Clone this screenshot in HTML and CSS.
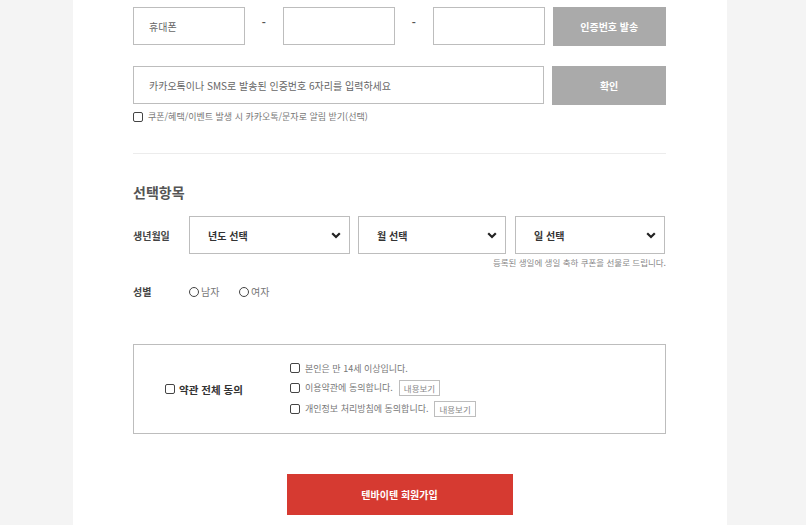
FILE: index.html
```html
<!DOCTYPE html>
<html lang="ko">
<head>
    <meta charset="UTF-8">
    <meta name="viewport" content="width=device-width, initial-scale=1.0">
    <title>회원가입</title>
    <link rel="stylesheet" href="styles.css">
</head>
<body>
    <div class="page">
        <div class="phone-row">
            <input type="text" class="field phone" placeholder="휴대폰">
            <span class="dash">-</span>
            <input type="text" class="field phone">
            <span class="dash">-</span>
            <input type="text" class="field phone">
            <button type="button" class="gray-btn">인증번호 발송</button>
        </div>

        <div class="code-row">
            <input type="text" class="field code" placeholder="카카오톡이나 SMS로 발송된 인증번호 6자리를 입력하세요">
            <button type="button" class="gray-btn">확인</button>
        </div>
        <label class="check small">
            <input type="checkbox">
            <span>쿠폰/혜택/이벤트 발생 시 카카오톡/문자로 알림 받기(선택)</span>
        </label>

        <hr class="divider">

        <h2 class="section-title">선택항목</h2>

        <div class="form-row birth">
            <span class="row-label">생년월일</span>
            <div class="select-wrap year">
                <select><option>년도 선택</option></select>
                <svg class="chevron" width="10" height="7" viewBox="0 0 10 7"><path d="M1.2 1.2 L5 5 L8.8 1.2" fill="none" stroke="#222" stroke-width="2.2"/></svg>
            </div>
            <div class="select-wrap month">
                <select><option>월 선택</option></select>
                <svg class="chevron" width="10" height="7" viewBox="0 0 10 7"><path d="M1.2 1.2 L5 5 L8.8 1.2" fill="none" stroke="#222" stroke-width="2.2"/></svg>
            </div>
            <div class="select-wrap day">
                <select><option>일 선택</option></select>
                <svg class="chevron" width="10" height="7" viewBox="0 0 10 7"><path d="M1.2 1.2 L5 5 L8.8 1.2" fill="none" stroke="#222" stroke-width="2.2"/></svg>
            </div>
        </div>
        <p class="birth-note">등록된 생일에 생일 축하 쿠폰을 선물로 드립니다.</p>

        <div class="form-row gender">
            <span class="row-label">성별</span>
            <label class="radio"><input type="radio" name="gender"><span>남자</span></label>
            <label class="radio"><input type="radio" name="gender"><span>여자</span></label>
        </div>

        <div class="terms">
            <div class="terms-all">
                <label class="check strong">
                    <input type="checkbox">
                    <span>약관 전체 동의</span>
                </label>
            </div>
            <div class="terms-list">
                <label class="check small">
                    <input type="checkbox">
                    <span>본인은 만 14세 이상입니다.</span>
                </label>
                <div class="terms-item">
                    <label class="check small">
                        <input type="checkbox">
                        <span>이용약관에 동의합니다.</span>
                    </label>
                    <button type="button" class="view-btn">내용보기</button>
                </div>
                <div class="terms-item">
                    <label class="check small">
                        <input type="checkbox">
                        <span>개인정보 처리방침에 동의합니다.</span>
                    </label>
                    <button type="button" class="view-btn">내용보기</button>
                </div>
            </div>
        </div>

        <div class="submit-wrap">
            <button type="submit" class="submit-btn">텐바이텐 회원가입</button>
        </div>
    </div>
</body>
</html>
```

FILE: styles.css
```css
body {
    margin: 0;
    background-color: #f4f4f4;
    font-family: "Noto Sans CJK KR", "Noto Sans", sans-serif;
    color: #333;
}
.page {
    width: 533px;
    min-height: 525px;
    margin-left: 73px;
    padding: 7px 61px 0 60px;
    background: #fff;
    box-sizing: content-box;
}
.field {
    box-sizing: border-box;
    height: 38px;
    border: 1px solid #bdbdbd;
    padding: 0 15px;
    font-family: inherit;
    font-size: 10px;
    color: #333;
    outline: none;
}
.field::placeholder {
    color: #666;
}
.phone-row {
    display: flex;
    align-items: flex-start;
}
.phone {
    width: 112px;
}
.dash {
    width: 38px;
    text-align: center;
    line-height: 30px;
    font-size: 11px;
    font-weight: bold;
    color: #555;
}
.gray-btn {
    width: 114px;
    height: 39px;
    margin-left: 8px;
    border: none;
    background-color: #aaaaaa;
    color: #fff;
    font-family: inherit;
    font-size: 10px;
    font-weight: bold;
    cursor: pointer;
}
.code-row {
    display: flex;
    margin-top: 20px;
}
.code {
    width: 412px;
}
.check {
    display: flex;
    align-items: center;
    gap: 5px;
}
.check input[type="checkbox"] {
    appearance: none;
    width: 10px;
    height: 10px;
    margin: 0;
    border: 1px solid #444;
    border-radius: 2px;
    background: #fff;
    box-sizing: border-box;
}
.check.small {
    font-size: 9px;
    color: #777;
}
.page > .check.small {
    margin-top: 5px;
}
.divider {
    border: none;
    border-top: 1px solid #ececec;
    margin: 30px 0 0 0;
}
.section-title {
    margin: 26px 0 0 0;
    font-size: 14px;
    font-weight: bold;
    color: #555;
    line-height: 24px;
}
.form-row {
    display: flex;
    align-items: center;
}
.birth {
    margin-top: 12px;
}
.row-label {
    width: 56px;
    font-size: 10px;
    font-weight: bold;
    color: #444;
}
.select-wrap {
    position: relative;
    height: 38px;
}
.select-wrap select {
    appearance: none;
    width: 100%;
    height: 38px;
    border: 1px solid #bdbdbd;
    background: #fff;
    padding: 0 18px;
    font-family: inherit;
    font-size: 10px;
    font-weight: bold;
    color: #333;
    outline: none;
}
.chevron {
    position: absolute;
    right: 9px;
    top: 16px;
}
.year {
    width: 161px;
}
.month {
    width: 148px;
    margin-left: 8px;
}
.day {
    width: 150px;
    margin-left: 9px;
}
.birth-note {
    margin: 2px 0 0 0;
    text-align: right;
    font-size: 8.5px;
    color: #888;
}
.gender {
    margin-top: 16px;
}
.radio {
    display: flex;
    align-items: center;
    gap: 2px;
    width: 50px;
    font-size: 10px;
    color: #777;
}
.radio input {
    appearance: none;
    width: 10px;
    height: 10px;
    margin: 0;
    border: 1px solid #444;
    border-radius: 50%;
    box-sizing: border-box;
}
.terms {
    display: flex;
    align-items: center;
    height: 90px;
    margin-top: 45px;
    border: 1px solid #bdbdbd;
    box-sizing: border-box;
}
.terms-all {
    width: 140px;
    padding-right: 16px;
    display: flex;
    justify-content: center;
}
.check.strong {
    font-size: 10.5px;
    font-weight: bold;
    color: #333;
    gap: 4px;
}
.terms-list {
    display: flex;
    flex-direction: column;
    gap: 5px;
}
.terms-item {
    display: flex;
    align-items: center;
    gap: 6px;
}
.view-btn {
    height: 16px;
    padding: 0 4px;
    border: 1px solid #bdbdbd;
    background: #fff;
    font-family: inherit;
    font-size: 8.5px;
    color: #888;
}
.submit-wrap {
    display: flex;
    justify-content: center;
    margin-top: 40px;
}
.submit-btn {
    width: 226px;
    height: 41px;
    border: none;
    background-color: #d63a31;
    color: #fff;
    font-family: inherit;
    font-size: 10px;
    font-weight: bold;
    cursor: pointer;
}
```
